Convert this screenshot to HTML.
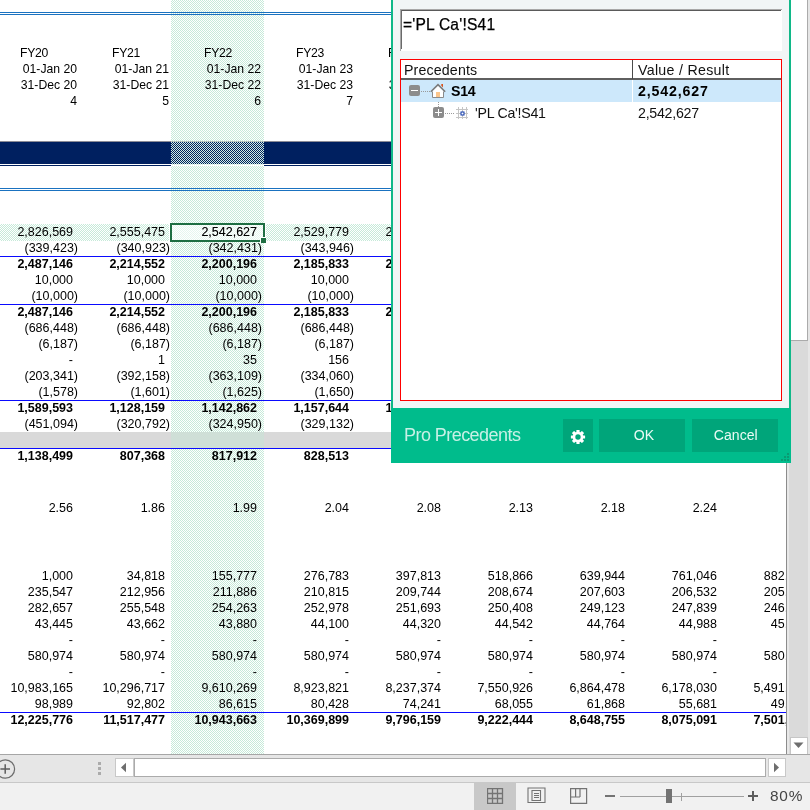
<!DOCTYPE html>
<html lang="en">
<head>
<meta charset="utf-8">
<title>Pro Precedents</title>
<style>
html,body{margin:0;padding:0;}
body{width:810px;height:810px;overflow:hidden;background:#fff;position:relative;font-family:"Liberation Sans",Arial,sans-serif;}
.abs,.sheet div,.dlg div,.bar div{position:absolute;}
.sheet{will-change:transform;position:absolute;left:0;top:0;width:786px;height:754px;overflow:hidden;background:#fff;}
.chk{background-image:repeating-conic-gradient(#c6ead9 0 25%,rgba(255,255,255,0) 0 50%);background-size:2px 2px;}
.chkn{background-image:repeating-conic-gradient(#002060 0 25%,#d3eee1 0 50%);background-size:2px 2px;}
.c{font-size:12.5px;line-height:16px;height:16px;white-space:nowrap;color:#000;text-align:right;}
.c.l{text-align:left;letter-spacing:-0.3px;}
.c.h{font-size:12.2px;}
.c.b{font-weight:bold;}
.bl{left:0;width:786px;height:1px;background:#0a0aff;}
.dbl{left:0;width:786px;height:1px;background:#1a72c0;}
</style>
</head>
<body>
<div class="sheet">
  <!-- row / column highlight -->
  <div class="chk" style="left:0;top:224px;width:169px;height:17px"></div>
  <div class="chk" style="left:266px;top:224px;width:520px;height:17px"></div>
  <div class="chk" style="left:171px;top:0;width:93px;height:754px"></div>
  <!-- double blue rules -->
  <div class="dbl" style="top:12px"></div><div class="dbl" style="top:14px"></div>
  <div class="dbl" style="top:188px"></div><div class="dbl" style="top:190px"></div>
  <!-- navy band -->
  <div style="left:0;top:141px;width:786px;height:1px;background:#8c8c96"></div>
  <div style="left:0;top:142px;width:786px;height:22px;background:#002060"></div>
  <div style="left:0;top:165px;width:786px;height:1px;background:#002060"></div>
  <div class="chkn" style="left:171px;top:142px;width:93px;height:22px"></div>
  <div style="left:171px;top:165px;width:93px;height:1px;background:#fff"></div>
  <div style="left:171px;top:141px;width:93px;height:1px;background:#b5c2bd"></div>
  <!-- grey band -->
  <div style="left:0;top:432px;width:786px;height:16px;background:#d9d9d9"></div>
  <div style="left:171px;top:432px;width:93px;height:16px;background:#cfdfd7"></div>
  <!-- blue rules -->
  <div class="bl" style="top:256px"></div>
  <div class="bl" style="top:304px"></div>
  <div class="bl" style="top:400px"></div>
  <div class="bl" style="top:448px"></div>
  <div class="bl" style="top:712px"></div>
  <!-- cells -->
<div class="c h l" style="left:20px;top:45px">FY20</div>
<div class="c h" style="right:709px;top:61px">01-Jan 20</div>
<div class="c h" style="right:709px;top:77px">31-Dec 20</div>
<div class="c h" style="right:709px;top:93px">4</div>
<div class="c h l" style="left:112px;top:45px">FY21</div>
<div class="c h" style="right:617px;top:61px">01-Jan 21</div>
<div class="c h" style="right:617px;top:77px">31-Dec 21</div>
<div class="c h" style="right:617px;top:93px">5</div>
<div class="c h l" style="left:204px;top:45px">FY22</div>
<div class="c h" style="right:525px;top:61px">01-Jan 22</div>
<div class="c h" style="right:525px;top:77px">31-Dec 22</div>
<div class="c h" style="right:525px;top:93px">6</div>
<div class="c h l" style="left:296px;top:45px">FY23</div>
<div class="c h" style="right:433px;top:61px">01-Jan 23</div>
<div class="c h" style="right:433px;top:77px">31-Dec 23</div>
<div class="c h" style="right:433px;top:93px">7</div>
<div class="c h l" style="left:388px;top:45px">FY24</div>
<div class="c h" style="right:341px;top:61px">01-Jan 24</div>
<div class="c h" style="right:341px;top:77px">31-Dec 24</div>
<div class="c h" style="right:341px;top:93px">8</div>
<div class="c h l" style="left:480px;top:45px">FY25</div>
<div class="c h" style="right:249px;top:61px">01-Jan 25</div>
<div class="c h" style="right:249px;top:77px">31-Dec 25</div>
<div class="c h" style="right:249px;top:93px">9</div>
<div class="c h l" style="left:572px;top:45px">FY26</div>
<div class="c h" style="right:157px;top:61px">01-Jan 26</div>
<div class="c h" style="right:157px;top:77px">31-Dec 26</div>
<div class="c h" style="right:157px;top:93px">10</div>
<div class="c h l" style="left:664px;top:45px">FY27</div>
<div class="c h" style="right:65px;top:61px">01-Jan 27</div>
<div class="c h" style="right:65px;top:77px">31-Dec 27</div>
<div class="c h" style="right:65px;top:93px">11</div>
<div class="c h l" style="left:756px;top:45px">FY28</div>
<div class="c h" style="right:-27px;top:61px">01-Jan 28</div>
<div class="c h" style="right:-27px;top:77px">31-Dec 28</div>
<div class="c h" style="right:-27px;top:93px">12</div>
<div class="c" style="right:713px;top:224px">2,826,569</div>
<div class="c" style="right:621px;top:224px">2,555,475</div>
<div class="c" style="right:529px;top:224px">2,542,627</div>
<div class="c" style="right:437px;top:224px">2,529,779</div>
<div class="c" style="right:345px;top:224px">2,516,924</div>
<div class="c" style="right:253px;top:224px">2,504,061</div>
<div class="c" style="right:161px;top:224px">2,491,190</div>
<div class="c" style="right:69px;top:224px">2,478,311</div>
<div class="c" style="right:-23px;top:224px">2,465,424</div>
<div class="c" style="right:708px;top:240px">(339,423)</div>
<div class="c" style="right:616px;top:240px">(340,923)</div>
<div class="c" style="right:524px;top:240px">(342,431)</div>
<div class="c" style="right:432px;top:240px">(343,946)</div>
<div class="c" style="right:340px;top:240px">(345,469)</div>
<div class="c" style="right:248px;top:240px">(347,000)</div>
<div class="c" style="right:156px;top:240px">(348,538)</div>
<div class="c" style="right:64px;top:240px">(350,084)</div>
<div class="c" style="right:-28px;top:240px">(351,638)</div>
<div class="c b" style="right:713px;top:256px">2,487,146</div>
<div class="c b" style="right:621px;top:256px">2,214,552</div>
<div class="c b" style="right:529px;top:256px">2,200,196</div>
<div class="c b" style="right:437px;top:256px">2,185,833</div>
<div class="c b" style="right:345px;top:256px">2,171,455</div>
<div class="c b" style="right:253px;top:256px">2,157,061</div>
<div class="c b" style="right:161px;top:256px">2,142,652</div>
<div class="c b" style="right:69px;top:256px">2,128,227</div>
<div class="c b" style="right:-23px;top:256px">2,113,786</div>
<div class="c" style="right:713px;top:272px">10,000</div>
<div class="c" style="right:621px;top:272px">10,000</div>
<div class="c" style="right:529px;top:272px">10,000</div>
<div class="c" style="right:437px;top:272px">10,000</div>
<div class="c" style="right:345px;top:272px">10,000</div>
<div class="c" style="right:253px;top:272px">10,000</div>
<div class="c" style="right:161px;top:272px">10,000</div>
<div class="c" style="right:69px;top:272px">10,000</div>
<div class="c" style="right:-23px;top:272px">10,000</div>
<div class="c" style="right:708px;top:288px">(10,000)</div>
<div class="c" style="right:616px;top:288px">(10,000)</div>
<div class="c" style="right:524px;top:288px">(10,000)</div>
<div class="c" style="right:432px;top:288px">(10,000)</div>
<div class="c" style="right:340px;top:288px">(10,000)</div>
<div class="c" style="right:248px;top:288px">(10,000)</div>
<div class="c" style="right:156px;top:288px">(10,000)</div>
<div class="c" style="right:64px;top:288px">(10,000)</div>
<div class="c" style="right:-28px;top:288px">(10,000)</div>
<div class="c b" style="right:713px;top:304px">2,487,146</div>
<div class="c b" style="right:621px;top:304px">2,214,552</div>
<div class="c b" style="right:529px;top:304px">2,200,196</div>
<div class="c b" style="right:437px;top:304px">2,185,833</div>
<div class="c b" style="right:345px;top:304px">2,171,455</div>
<div class="c b" style="right:253px;top:304px">2,157,061</div>
<div class="c b" style="right:161px;top:304px">2,142,652</div>
<div class="c b" style="right:69px;top:304px">2,128,227</div>
<div class="c b" style="right:-23px;top:304px">2,113,786</div>
<div class="c" style="right:708px;top:320px">(686,448)</div>
<div class="c" style="right:616px;top:320px">(686,448)</div>
<div class="c" style="right:524px;top:320px">(686,448)</div>
<div class="c" style="right:432px;top:320px">(686,448)</div>
<div class="c" style="right:340px;top:320px">(686,448)</div>
<div class="c" style="right:248px;top:320px">(686,448)</div>
<div class="c" style="right:156px;top:320px">(686,448)</div>
<div class="c" style="right:64px;top:320px">(686,448)</div>
<div class="c" style="right:-28px;top:320px">(686,448)</div>
<div class="c" style="right:708px;top:336px">(6,187)</div>
<div class="c" style="right:616px;top:336px">(6,187)</div>
<div class="c" style="right:524px;top:336px">(6,187)</div>
<div class="c" style="right:432px;top:336px">(6,187)</div>
<div class="c" style="right:340px;top:336px">(6,187)</div>
<div class="c" style="right:248px;top:336px">(6,187)</div>
<div class="c" style="right:156px;top:336px">(6,187)</div>
<div class="c" style="right:64px;top:336px">(6,187)</div>
<div class="c" style="right:-28px;top:336px">(6,187)</div>
<div class="c" style="right:713px;top:352px">-</div>
<div class="c" style="right:621px;top:352px">1</div>
<div class="c" style="right:529px;top:352px">35</div>
<div class="c" style="right:437px;top:352px">156</div>
<div class="c" style="right:345px;top:352px">277</div>
<div class="c" style="right:253px;top:352px">398</div>
<div class="c" style="right:161px;top:352px">519</div>
<div class="c" style="right:69px;top:352px">640</div>
<div class="c" style="right:-23px;top:352px">761</div>
<div class="c" style="right:708px;top:368px">(203,341)</div>
<div class="c" style="right:616px;top:368px">(392,158)</div>
<div class="c" style="right:524px;top:368px">(363,109)</div>
<div class="c" style="right:432px;top:368px">(334,060)</div>
<div class="c" style="right:340px;top:368px">(305,011)</div>
<div class="c" style="right:248px;top:368px">(275,962)</div>
<div class="c" style="right:156px;top:368px">(246,913)</div>
<div class="c" style="right:64px;top:368px">(217,864)</div>
<div class="c" style="right:-28px;top:368px">(188,815)</div>
<div class="c" style="right:708px;top:384px">(1,578)</div>
<div class="c" style="right:616px;top:384px">(1,601)</div>
<div class="c" style="right:524px;top:384px">(1,625)</div>
<div class="c" style="right:432px;top:384px">(1,650)</div>
<div class="c" style="right:340px;top:384px">(1,674)</div>
<div class="c" style="right:248px;top:384px">(1,699)</div>
<div class="c" style="right:156px;top:384px">(1,725)</div>
<div class="c" style="right:64px;top:384px">(1,751)</div>
<div class="c" style="right:-28px;top:384px">(1,777)</div>
<div class="c b" style="right:713px;top:400px">1,589,593</div>
<div class="c b" style="right:621px;top:400px">1,128,159</div>
<div class="c b" style="right:529px;top:400px">1,142,862</div>
<div class="c b" style="right:437px;top:400px">1,157,644</div>
<div class="c b" style="right:345px;top:400px">1,172,505</div>
<div class="c b" style="right:253px;top:400px">1,187,446</div>
<div class="c b" style="right:161px;top:400px">1,202,468</div>
<div class="c b" style="right:69px;top:400px">1,217,571</div>
<div class="c b" style="right:-23px;top:400px">1,232,757</div>
<div class="c" style="right:708px;top:416px">(451,094)</div>
<div class="c" style="right:616px;top:416px">(320,792)</div>
<div class="c" style="right:524px;top:416px">(324,950)</div>
<div class="c" style="right:432px;top:416px">(329,132)</div>
<div class="c" style="right:340px;top:416px">(333,338)</div>
<div class="c" style="right:248px;top:416px">(337,568)</div>
<div class="c" style="right:156px;top:416px">(341,822)</div>
<div class="c" style="right:64px;top:416px">(346,101)</div>
<div class="c" style="right:-28px;top:416px">(350,405)</div>
<div class="c b" style="right:713px;top:448px">1,138,499</div>
<div class="c b" style="right:621px;top:448px">807,368</div>
<div class="c b" style="right:529px;top:448px">817,912</div>
<div class="c b" style="right:437px;top:448px">828,513</div>
<div class="c b" style="right:345px;top:448px">839,167</div>
<div class="c b" style="right:253px;top:448px">849,878</div>
<div class="c b" style="right:161px;top:448px">860,646</div>
<div class="c b" style="right:69px;top:448px">871,470</div>
<div class="c b" style="right:-23px;top:448px">882,352</div>
<div class="c" style="right:713px;top:500px">2.56</div>
<div class="c" style="right:621px;top:500px">1.86</div>
<div class="c" style="right:529px;top:500px">1.99</div>
<div class="c" style="right:437px;top:500px">2.04</div>
<div class="c" style="right:345px;top:500px">2.08</div>
<div class="c" style="right:253px;top:500px">2.13</div>
<div class="c" style="right:161px;top:500px">2.18</div>
<div class="c" style="right:69px;top:500px">2.24</div>
<div class="c" style="right:713px;top:568px">1,000</div>
<div class="c" style="right:621px;top:568px">34,818</div>
<div class="c" style="right:529px;top:568px">155,777</div>
<div class="c" style="right:437px;top:568px">276,783</div>
<div class="c" style="right:345px;top:568px">397,813</div>
<div class="c" style="right:253px;top:568px">518,866</div>
<div class="c" style="right:161px;top:568px">639,944</div>
<div class="c" style="right:69px;top:568px">761,046</div>
<div class="c" style="right:-23px;top:568px">882,171</div>
<div class="c" style="right:713px;top:584px">235,547</div>
<div class="c" style="right:621px;top:584px">212,956</div>
<div class="c" style="right:529px;top:584px">211,886</div>
<div class="c" style="right:437px;top:584px">210,815</div>
<div class="c" style="right:345px;top:584px">209,744</div>
<div class="c" style="right:253px;top:584px">208,674</div>
<div class="c" style="right:161px;top:584px">207,603</div>
<div class="c" style="right:69px;top:584px">206,532</div>
<div class="c" style="right:-23px;top:584px">205,461</div>
<div class="c" style="right:713px;top:600px">282,657</div>
<div class="c" style="right:621px;top:600px">255,548</div>
<div class="c" style="right:529px;top:600px">254,263</div>
<div class="c" style="right:437px;top:600px">252,978</div>
<div class="c" style="right:345px;top:600px">251,693</div>
<div class="c" style="right:253px;top:600px">250,408</div>
<div class="c" style="right:161px;top:600px">249,123</div>
<div class="c" style="right:69px;top:600px">247,839</div>
<div class="c" style="right:-23px;top:600px">246,554</div>
<div class="c" style="right:713px;top:616px">43,445</div>
<div class="c" style="right:621px;top:616px">43,662</div>
<div class="c" style="right:529px;top:616px">43,880</div>
<div class="c" style="right:437px;top:616px">44,100</div>
<div class="c" style="right:345px;top:616px">44,320</div>
<div class="c" style="right:253px;top:616px">44,542</div>
<div class="c" style="right:161px;top:616px">44,764</div>
<div class="c" style="right:69px;top:616px">44,988</div>
<div class="c" style="right:-23px;top:616px">45,213</div>
<div class="c" style="right:713px;top:632px">-</div>
<div class="c" style="right:621px;top:632px">-</div>
<div class="c" style="right:529px;top:632px">-</div>
<div class="c" style="right:437px;top:632px">-</div>
<div class="c" style="right:345px;top:632px">-</div>
<div class="c" style="right:253px;top:632px">-</div>
<div class="c" style="right:161px;top:632px">-</div>
<div class="c" style="right:69px;top:632px">-</div>
<div class="c" style="right:-23px;top:632px">-</div>
<div class="c" style="right:713px;top:648px">580,974</div>
<div class="c" style="right:621px;top:648px">580,974</div>
<div class="c" style="right:529px;top:648px">580,974</div>
<div class="c" style="right:437px;top:648px">580,974</div>
<div class="c" style="right:345px;top:648px">580,974</div>
<div class="c" style="right:253px;top:648px">580,974</div>
<div class="c" style="right:161px;top:648px">580,974</div>
<div class="c" style="right:69px;top:648px">580,974</div>
<div class="c" style="right:-23px;top:648px">580,974</div>
<div class="c" style="right:713px;top:664px">-</div>
<div class="c" style="right:621px;top:664px">-</div>
<div class="c" style="right:529px;top:664px">-</div>
<div class="c" style="right:437px;top:664px">-</div>
<div class="c" style="right:345px;top:664px">-</div>
<div class="c" style="right:253px;top:664px">-</div>
<div class="c" style="right:161px;top:664px">-</div>
<div class="c" style="right:69px;top:664px">-</div>
<div class="c" style="right:-23px;top:664px">-</div>
<div class="c" style="right:713px;top:680px">10,983,165</div>
<div class="c" style="right:621px;top:680px">10,296,717</div>
<div class="c" style="right:529px;top:680px">9,610,269</div>
<div class="c" style="right:437px;top:680px">8,923,821</div>
<div class="c" style="right:345px;top:680px">8,237,374</div>
<div class="c" style="right:253px;top:680px">7,550,926</div>
<div class="c" style="right:161px;top:680px">6,864,478</div>
<div class="c" style="right:69px;top:680px">6,178,030</div>
<div class="c" style="right:-23px;top:680px">5,491,582</div>
<div class="c" style="right:713px;top:696px">98,989</div>
<div class="c" style="right:621px;top:696px">92,802</div>
<div class="c" style="right:529px;top:696px">86,615</div>
<div class="c" style="right:437px;top:696px">80,428</div>
<div class="c" style="right:345px;top:696px">74,241</div>
<div class="c" style="right:253px;top:696px">68,055</div>
<div class="c" style="right:161px;top:696px">61,868</div>
<div class="c" style="right:69px;top:696px">55,681</div>
<div class="c" style="right:-23px;top:696px">49,494</div>
<div class="c b" style="right:713px;top:712px">12,225,776</div>
<div class="c b" style="right:621px;top:712px">11,517,477</div>
<div class="c b" style="right:529px;top:712px">10,943,663</div>
<div class="c b" style="right:437px;top:712px">10,369,899</div>
<div class="c b" style="right:345px;top:712px">9,796,159</div>
<div class="c b" style="right:253px;top:712px">9,222,444</div>
<div class="c b" style="right:161px;top:712px">8,648,755</div>
<div class="c b" style="right:69px;top:712px">8,075,091</div>
<div class="c b" style="right:-23px;top:712px">7,501,451</div>
  <!-- selection -->
  <div style="left:170px;top:223px;width:91px;height:15px;border:2px solid #1e6e42;background:rgba(255,255,255,.55)"></div>
  <div class="c" style="right:529px;top:224px">2,542,627</div>
  <div style="left:260px;top:237px;width:6px;height:6px;background:#fff"></div>
  <div style="left:261px;top:238px;width:5px;height:5px;background:#1e6e42"></div>
</div>

<!-- vertical scrollbar -->
<div class="bar" style="will-change:transform;position:absolute;left:0;top:0;width:810px;height:0">
  <div style="left:786px;top:0;width:1px;height:755px;background:#8c8c8c"></div>
  <div style="left:787px;top:0;width:2px;height:755px;background:#e8e8e8"></div>
  <div style="left:789px;top:0;width:19px;height:755px;background:#dadada"></div>
  <div style="left:808px;top:0;width:2px;height:755px;background:#e6e6e6"></div>
  <div style="left:789px;top:0;width:18px;height:340px;background:#fff;border-right:1px solid #ababab;border-bottom:1px solid #ababab"></div>
  <div style="left:790px;top:737px;width:16px;height:16px;background:#fff;border:1px solid #c6c6c6"></div>
  <svg class="abs" style="left:793px;top:742px" width="11" height="7" viewBox="0 0 11 7"><path d="M0.5 0.5h10L5.5 6z" fill="#6e6e6e"/></svg>
</div>

<!-- bottom bars -->
<div class="bar" style="will-change:transform;position:absolute;left:0;top:0;width:810px;height:0">
  <div style="left:0;top:754px;width:810px;height:1px;background:#a6a6a6"></div>
  <div style="left:0;top:755px;width:810px;height:27px;background:#e6e6e6"></div>
  <div style="left:0;top:782px;width:810px;height:1px;background:#c8c8c8"></div>
  <div style="left:0;top:783px;width:810px;height:27px;background:#f1f1f1"></div>
  <!-- new sheet button -->
  <svg class="abs" style="left:0;top:758px" width="18" height="22" viewBox="0 0 18 22"><circle cx="5.400" cy="11" r="9.200" fill="none" stroke="#6b6b6b" stroke-width="1.2"/><path d="M0.400 11H10M5.200 6.200V15.800" stroke="#5e5e5e" stroke-width="1.500" fill="none"/></svg>
  <div style="left:98px;top:762px;width:3px;height:3px;background:#ababab"></div>
  <div style="left:98px;top:767px;width:3px;height:3px;background:#ababab"></div>
  <div style="left:98px;top:772px;width:3px;height:3px;background:#ababab"></div>
  <!-- horizontal scrollbar -->
  <div style="left:115px;top:758px;width:17px;height:17px;background:#fff;border:1px solid #c8c8c8"></div>
  <svg class="abs" style="left:120px;top:762px" width="7" height="11" viewBox="0 0 7 11"><path d="M6 0.7v9.6L1 5.5z" fill="#6e6e6e"/></svg>
  <div style="left:134px;top:758px;width:630px;height:17px;background:#fff;border:1px solid #ababab"></div>
  <div style="left:768px;top:758px;width:16px;height:17px;background:#fff;border:1px solid #c8c8c8"></div>
  <svg class="abs" style="left:773px;top:762px" width="7" height="11" viewBox="0 0 7 11"><path d="M1 0.7v9.6L6 5.5z" fill="#6e6e6e"/></svg>
  <!-- view buttons -->
  <div style="left:474px;top:783px;width:42px;height:27px;background:#c8c8c8"></div>
  <svg class="abs" style="left:487px;top:788px" width="17" height="16" viewBox="0 0 17 16"><path d="M0.5 0.5h15v15h-15zM5.5 0.5v15M10.5 0.5v15M0.5 5.5h15M0.5 10.5h15" fill="none" stroke="#737373" stroke-width="1.3"/></svg>
  <svg class="abs" style="left:527px;top:787px" width="19" height="17" viewBox="0 0 19 17"><path d="M1 1h17v14.5H1z" fill="none" stroke="#737373" stroke-width="1.1"/><path d="M5 3.5h8.5v10H5z" fill="none" stroke="#737373" stroke-width="1.1"/><path d="M7 6.5h5M7 8.5h5M7 10.500h5" stroke="#737373" stroke-width="1" fill="none"/></svg>
  <svg class="abs" style="left:570px;top:788px" width="18" height="16" viewBox="0 0 18 16"><path d="M0.6 0.6h16v14.8h-16z" fill="none" stroke="#737373" stroke-width="1.2"/><path d="M5.6 0.6v8.500M10 0.600v8.500M0.600 9h9.400" fill="none" stroke="#737373" stroke-width="1.2"/></svg>
  <!-- zoom slider -->
  <div style="left:605px;top:795px;width:10px;height:2px;background:#737373"></div>
  <div style="left:620px;top:796px;width:124px;height:1px;background:#a0a0a0"></div>
  <div style="left:681px;top:793px;width:1px;height:8px;background:#a0a0a0"></div>
  <div style="left:666px;top:789px;width:6px;height:14px;background:#737373"></div>
  <div style="left:748px;top:795px;width:10px;height:2px;background:#5e5e5e"></div>
  <div style="left:752px;top:791px;width:2px;height:10px;background:#5e5e5e"></div>
  <div style="left:770px;top:786px;width:36px;height:20px;line-height:20px;font-size:15.4px;color:#444;letter-spacing:0.8px">80%</div>
</div>

<!-- dialog -->
<div class="dlg" style="will-change:transform;position:absolute;left:391px;top:0;width:400px;height:463px;">
  <div style="left:0;top:0;width:396px;height:408px;background:#f1f5f6;border-left:2px solid #10b888;border-right:2px solid #10b888"></div>
  <!-- formula box -->
  <div style="left:9px;top:9px;width:381px;height:41px;background:#fff;border-top:1px solid #a8a8a8;border-left:1px solid #a8a8a8"></div>
  <div style="left:10px;top:10px;width:380px;height:1px;background:#5a5a5a"></div>
  <div style="left:10px;top:10px;width:1px;height:39px;background:#6a6a6a"></div>
  <div id="ftxt" style="left:12px;top:14px;height:22px;line-height:22px;font-size:15.6px;color:#000;white-space:nowrap;letter-spacing:0.2px;-webkit-text-stroke:0.25px #000">='PL Ca'!S41</div>
  <!-- tree -->
  <div style="left:9px;top:59px;width:380px;height:340px;background:#fff;border:1px solid #f00"></div>
  <div style="left:10px;top:78px;width:380px;height:2px;background:#5f5f5f"></div>
  <div style="left:241px;top:60px;width:1px;height:19px;background:#4a4a4a"></div>
  <div class="t" style="left:13px;top:60px;letter-spacing:0.15px">Precedents</div>
  <div class="t" style="left:247px;top:60px;letter-spacing:0.3px">Value / Result</div>
  <div style="left:10px;top:80px;width:380px;height:22px;background:#cde8fb"></div>
  <div style="left:241px;top:80px;width:1px;height:22px;background:#fff"></div>
  <!-- row 1 -->
  <div style="left:18px;top:85px;width:11px;height:11px;background:#8c8c8c;border-radius:2px"></div>
  <div style="left:20px;top:89.600px;width:7px;height:1.800px;background:#fff"></div>
  <div style="left:30px;top:91px;width:9px;height:0;border-top:1px dotted #9a9a9a"></div>
  <svg class="abs" style="left:39px;top:83px" width="16" height="16" viewBox="0 0 16 16"><path d="M11.300 1h1.700v3.400l-1.700-1.700z" fill="#d9541e"/><path d="M2.500 8.200v6.300h11V8.200L8 2.700z" fill="#fff"/><path d="M6 9h4v5.500H6z" fill="#fbc58b"/><path d="M2.500 8.500v6h11v-6" fill="none" stroke="#8a8a8a" stroke-width="1"/><path d="M0.800 8.800L8 1.600l7.200 7.200" fill="none" stroke="#7a7a7a" stroke-width="1.500"/></svg>
  <div class="t tb" style="left:60px;top:80px">S14</div>
  <div class="t tb" style="left:247px;top:80px;letter-spacing:0.85px">2,542,627</div>
  <!-- row 2 -->
  <div style="left:47px;top:102px;width:0;height:5px;border-left:1px dotted #9a9a9a"></div>
  <div style="left:42px;top:107px;width:11px;height:11px;background:#8c8c8c;border-radius:2px"></div>
  <div style="left:44px;top:111.700px;width:7px;height:1.600px;background:#fff"></div>
  <div style="left:46.700px;top:109px;width:1.600px;height:7px;background:#fff"></div>
  <div style="left:54px;top:113px;width:9px;height:0;border-top:1px dotted #9a9a9a"></div>
  <svg class="abs" style="left:65px;top:107px" width="13" height="13" viewBox="0 0 13 13"><path d="M2.500 0v12M6.500 0v12M10.500 0v12M0 2.500h12M0 6.500h12M0 10.500h12" stroke="#c4c4c4" stroke-width="1" fill="none"/><rect x="5" y="5" width="3" height="3" fill="#fff" stroke="#0a35a8" stroke-width="1"/></svg>
  <div class="t" style="left:84px;top:103px">'PL Ca'!S41</div>
  <div class="t" style="left:247px;top:103px">2,542,627</div>
  <!-- footer -->
  <div style="left:0;top:408px;width:400px;height:55px;background:#00bc8c"></div>
  <div id="ptxt" style="left:13px;top:422px;height:26px;line-height:26px;font-size:18px;color:rgba(255,255,255,.78);white-space:nowrap;letter-spacing:-0.55px">Pro Precedents</div>
  <div style="left:172px;top:419px;width:30px;height:33px;background:#00a57a"></div>
  <svg class="abs" style="left:179px;top:428.5px" width="16" height="16" viewBox="-8 -8 16 16"><g fill="#fff"><circle r="5.300"/><g id="t"><rect x="-1.600" y="-7.100" width="3.200" height="14.200" rx=".5"/></g><use href="#t" transform="rotate(45)"/><use href="#t" transform="rotate(90)"/><use href="#t" transform="rotate(135)"/></g><circle r="2.700" fill="#00a57a"/></svg>
  <div class="btn" style="left:208px;top:419px;width:86px;height:33px"><span style="padding-left:5px">OK</span></div>
  <div class="btn" style="left:301px;top:419px;width:86px;height:33px"><span style="padding-left:2px">Cancel</span></div>
  <!-- grip -->
  <div class="g" style="left:396px;top:453px"></div>
  <div class="g" style="left:393px;top:456px"></div><div class="g" style="left:396px;top:456px"></div>
  <div class="g" style="left:390px;top:459px"></div><div class="g" style="left:393px;top:459px"></div><div class="g" style="left:396px;top:459px"></div>
</div>
<style>
.t{font-size:14.200px;line-height:20px;height:20px;white-space:nowrap;color:#111;letter-spacing:-0.250px}
.tb{font-weight:bold;line-height:22px;height:22px;color:#000}
.btn{background:#00a57a;color:#e9fbf5;font-size:15.3px;line-height:31px;text-align:center}
.btn span{display:inline-block;transform:scaleX(.92)}
.g{width:2px;height:2px;background:#0a9a72}
</style>
</body>
</html>
